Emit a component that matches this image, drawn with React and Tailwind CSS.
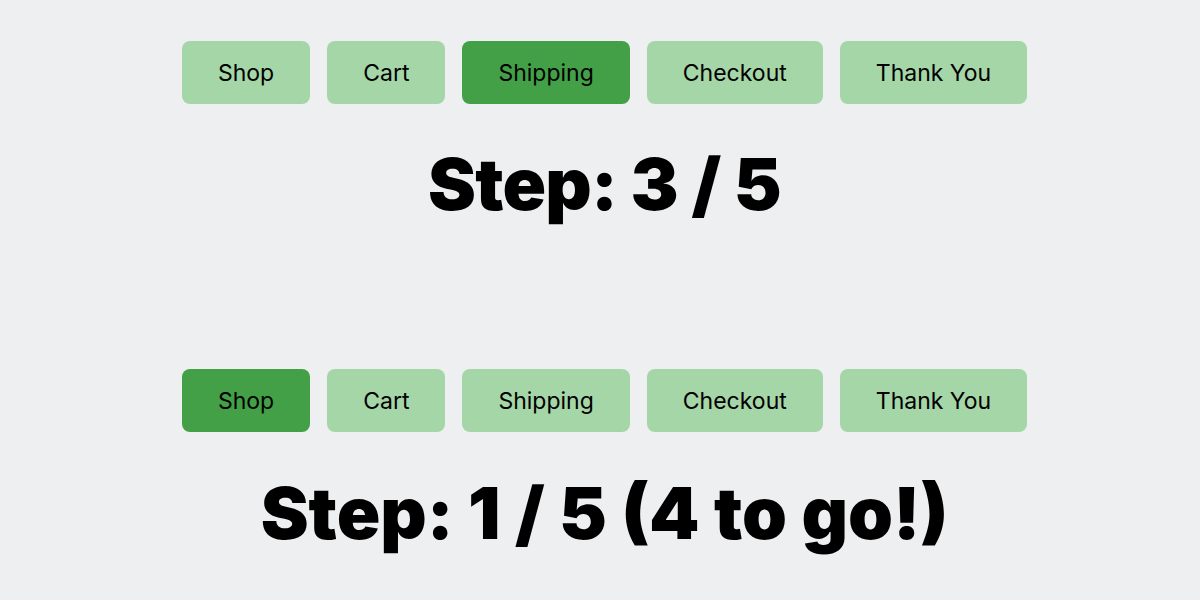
import React from "react";

const steps = ["Shop", "Cart", "Shipping", "Checkout", "Thank You"];

function Nav({ active }) {
  return (
    <div className="flex gap-[17px]">
      {steps.map((s, i) => (
        <div
          key={s}
          className={
            i === active
              ? "h-[63px] px-9 pt-[2px] flex items-center justify-center rounded-lg bg-[#43a047] text-[23px] text-black"
              : "h-[63px] px-9 pt-[2px] flex items-center justify-center rounded-lg bg-[#a5d6a7] text-[23px] text-black"
          }
        >
          {s}
        </div>
      ))}
    </div>
  );
}

export default function App() {
  return (
    <div
      className="w-[1200px] h-[600px] pl-[9px] bg-[#eeeff1] flex flex-col items-center overflow-hidden"
      style={{ fontFamily: "Inter, 'Noto Sans', sans-serif" }}
    >
      <div className="pt-[41px]">
        <Nav active={2} />
      </div>
      <h1 className="mt-[44px] text-[72px] leading-[72px] font-black tracking-[-0.8px] text-black">Step: 3 / 5</h1>
      <div className="mt-[149px]">
        <Nav active={0} />
      </div>
      <h1 className="mt-[45px] text-[72px] leading-[72px] font-black text-black">Step: 1 / 5 (4 to go!)</h1>
    </div>
  );
}
